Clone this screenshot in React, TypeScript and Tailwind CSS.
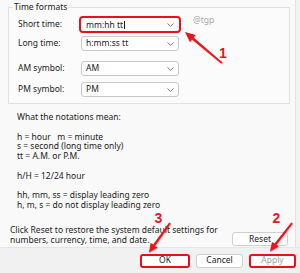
import React from 'react';

interface FormatRow {
  label: string;
  value: string;
  gap: string;
  active?: boolean;
}

const rows: FormatRow[] = [
  { label: 'Short time:', value: 'mm:hh tt', gap: 'mt-[9px]', active: true },
  { label: 'Long time:', value: 'h:mm:ss tt', gap: 'mt-[4px]' },
  { label: 'AM symbol:', value: 'AM', gap: 'mt-[10px]' },
  { label: 'PM symbol:', value: 'PM', gap: 'mt-[6px]' },
];

const notes = [
  'What the notations mean:',
  '',
  'h = hour   m = minute',
  's = second (long time only)',
  'tt = A.M. or P.M.',
  '',
  'h/H = 12/24 hour',
  '',
  'hh, mm, ss = display leading zero',
  'h, m, s = do not display leading zero',
];

function Chevron() {
  return (
    <svg width="7" height="4" viewBox="0 0 7 4" className="shrink-0">
      <path d="M0.5 0.5 L3.5 3.3 L6.5 0.5" fill="none" stroke="#6b6b6b" strokeWidth="0.9" />
    </svg>
  );
}

function ComboBox({ value, active }: { value: string; active?: boolean }) {
  return (
    <div
      className={
        active
          ? 'flex h-[17px] w-[102px] -ml-[2px] -my-[1px] items-center rounded-[4px] border-2 border-[#e8101a] bg-white pl-[5px] pr-[5px]'
          : 'flex h-[15px] w-[98px] items-center rounded-[3px] border border-[#c8c8c8] bg-white pl-[4px] pr-[4px]'
      }
    >
      <span className="flex-1 whitespace-pre text-[8.5px] leading-none text-[#1b1b1b]">
        {value}
        {active && <span className="ml-[1px] inline-block h-[8px] w-px translate-y-[1px] bg-[#1b1b1b]" />}
      </span>
      <Chevron />
    </div>
  );
}

function DialogButton({ children, highlight, disabled, width }: { children: React.ReactNode; highlight?: boolean; disabled?: boolean; width: string }) {
  return (
    <button
      className={`${width} flex h-[14px] items-center justify-center rounded-[3px] bg-white text-[8.5px] leading-none ${
        highlight ? 'border-2 border-[#e8101a]' : 'border border-[#cfcfcf]'
      } ${disabled ? 'text-[#a3a3a3]' : 'text-[#1b1b1b]'}`}
    >
      {children}
    </button>
  );
}

export default function App() {
  return (
    <div
      className="relative flex h-[273px] w-[300px] flex-col overflow-hidden bg-[#f9f9f9] text-[#1b1b1b]"
      style={{ fontFamily: '"Noto Sans", "Open Sans", Arial, sans-serif' }}
    >
      <div className="flex flex-1">
        <div className="flex w-[296px] flex-col border-r border-[#e2e2e2]">
          {/* Time formats group */}
          <div className="relative ml-[8px] mt-[7px] h-[97px] w-[282px] border border-[#e0e0e0] bg-[#fbfbfb] pl-[9px]">
            <span className="absolute -top-[6px] left-[4px] bg-[#f9f9f9] px-[1px] text-[8.5px] leading-[10px]">
              Time formats
            </span>
            {rows.map((row) => (
              <div key={row.label} className={`flex items-center ${row.gap}`}>
                <span className="w-[63px] text-[8.5px] leading-none">{row.label}</span>
                <ComboBox value={row.value} active={row.active} />
                {row.active && <span className="ml-[12px] -mt-[8px] text-[8.5px] text-[#a8a8a8]">@tgp</span>}
              </div>
            ))}
          </div>

          {/* Notations */}
          <div className="ml-[17px] mt-[8px] text-[8.5px] leading-[9.8px]">
            {notes.map((line, i) => (
              <div key={i} className="h-[9.8px] whitespace-pre">
                {line}
              </div>
            ))}
          </div>

          {/* Reset row */}
          <div className="mt-[15px] flex items-end pl-[10px] pr-[7px]">
            <p className="flex-1 text-[8.5px] leading-[10.5px]">
              Click Reset to restore the system default settings for
              <br />
              numbers, currency, time, and date.
            </p>
            <DialogButton width="w-[56px]">Reset</DialogButton>
          </div>
        </div>
        <div className="flex-1 bg-[#f3f3f3]" />
      </div>

      {/* Bottom command bar */}
      <div className="flex h-[26px] items-center justify-end gap-[6px] border-t border-[#e6e6e6] bg-[#f1f1f1] pr-[4px]">
        <DialogButton width="w-[50px]" highlight>
          OK
        </DialogButton>
        <DialogButton width="w-[47px]">Cancel</DialogButton>
        <DialogButton width="w-[47px]" highlight disabled>
          Apply
        </DialogButton>
      </div>

      {/* Annotation arrows */}
      <svg className="pointer-events-none absolute left-0 top-0" width="300" height="273" viewBox="0 0 300 273">
        <defs>
          <filter id="shade" x="-20%" y="-20%" width="140%" height="140%">
            <feDropShadow dx="0.6" dy="0.8" stdDeviation="0.6" floodColor="#000" floodOpacity="0.3" />
          </filter>
        </defs>
        <g fill="#e8141b" stroke="none" filter="url(#shade)">
          {/* arrow 1 */}
          <polygon points="222.6,62.4 221.2,63.6 192,39.4 190,42 185,32 195.6,35 193.6,37.4" />
          {/* arrow 3 */}
          <polygon points="170.8,223.4 169.2,222.6 153.2,244.6 150.6,243 149,252.6 157.6,247.6 155,246" />
          {/* arrow 2 */}
          <polygon points="292.8,223.4 291.2,222.6 274.6,243.6 272,242 270,251.4 278.8,246.6 276.4,245" />
        </g>
        <g
          fill="#e8141b"
          stroke="#ffffff"
          strokeWidth="2"
          paintOrder="stroke"
          fontFamily="Liberation Sans, Arial, sans-serif"
          fontWeight="700"
          fontSize="14"
        >
          <text x="219" y="58">1</text>
          <text x="272.5" y="222.5">2</text>
          <text x="154.5" y="223">3</text>
        </g>
      </svg>
    </div>
  );
}
